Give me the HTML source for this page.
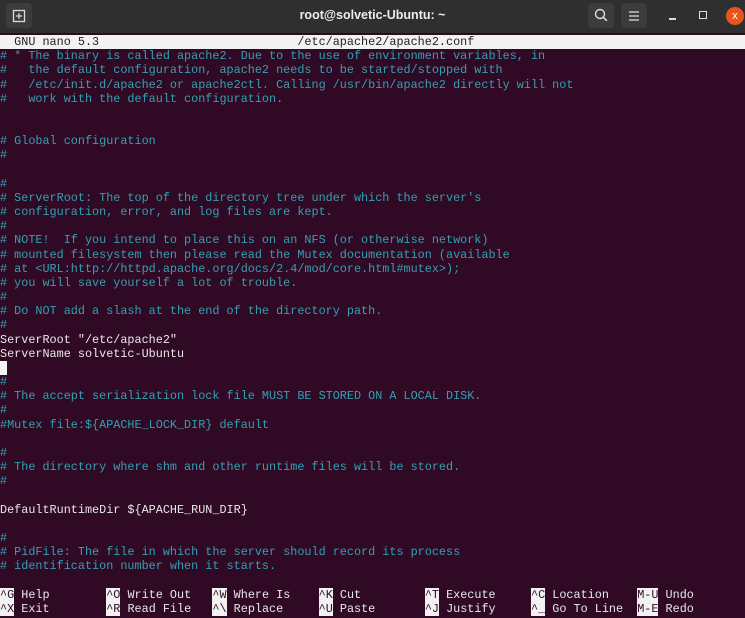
<!DOCTYPE html>
<html><head><meta charset="utf-8"><style>
html,body{margin:0;padding:0;width:745px;height:618px;overflow:hidden;background:#300a24;}
#tb{position:absolute;left:0;top:0;width:745px;height:33px;background:#2f2f2f;}
.btn{position:absolute;top:3px;height:25px;background:#3c3c3c;border-radius:4px;}
#title{position:absolute;left:0;width:745px;top:8px;text-align:center;color:#eee;font:bold 12.5px "Liberation Sans",sans-serif;}
pre{position:absolute;left:0;top:35px;margin:0;font:11.8px/14.17px "Liberation Mono",monospace;color:#e8e8e8;white-space:pre;}
.c{color:#33a0b2;}
.h{background:#f2f2f2;color:#222;display:inline-block;width:745px;margin-top:-1px;}
.k{background:#f2f2f2;color:#300a24;}
.cur{background:#f2f2f2;}
</style></head><body>
<div id="tb">
<div class="btn" style="left:6px;width:26px;"></div>
<svg style="position:absolute;left:12px;top:9px" width="14" height="14"><rect x="1.5" y="1.5" width="11" height="11" fill="none" stroke="#ddd" stroke-width="1.3"/><path d="M7 4v6M4 7h6" stroke="#ddd" stroke-width="1.2"/></svg>
<div id="title">root@solvetic-Ubuntu: ~</div>
<div class="btn" style="left:588px;width:26px;"></div>
<svg style="position:absolute;left:594px;top:8px" width="14" height="15"><circle cx="6" cy="6" r="4.5" fill="none" stroke="#ddd" stroke-width="1.4"/><path d="M9.3 9.3l3.5 3.5" stroke="#ddd" stroke-width="1.5"/></svg>
<div class="btn" style="left:621px;width:26px;"></div>
<svg style="position:absolute;left:628px;top:10px" width="12" height="12"><path d="M1 2h10M1 6h10M1 10h10" stroke="#ddd" stroke-width="1.3"/></svg>
<div style="position:absolute;left:669px;top:18px;width:7px;height:1.5px;background:#ddd"></div>
<div style="position:absolute;left:699px;top:11px;width:6px;height:6px;border:1.3px solid #ddd"></div>
<div style="position:absolute;left:726px;top:7px;width:18px;height:18px;border-radius:50%;background:#e9541e;color:#fff;font:11px 'Liberation Sans',sans-serif;text-align:center;line-height:18px">x</div>
</div>
<pre><span class="h">  GNU nano 5.3                            /etc/apache2/apache2.conf                          </span>
<span class="c"># * The binary is called apache2. Due to the use of environment variables, in
#   the default configuration, apache2 needs to be started/stopped with
#   /etc/init.d/apache2 or apache2ctl. Calling /usr/bin/apache2 directly will not
#   work with the default configuration.


# Global configuration
#

#
# ServerRoot: The top of the directory tree under which the server's
# configuration, error, and log files are kept.
#
# NOTE!  If you intend to place this on an NFS (or otherwise network)
# mounted filesystem then please read the Mutex documentation (available
# at &lt;URL:http://httpd.apache.org/docs/2.4/mod/core.html#mutex&gt;);
# you will save yourself a lot of trouble.
#
# Do NOT add a slash at the end of the directory path.
#</span>
ServerRoot "/etc/apache2"
ServerName solvetic-Ubuntu
<span class="cur"> </span>
<span class="c">#
# The accept serialization lock file MUST BE STORED ON A LOCAL DISK.
#
#Mutex file:${APACHE_LOCK_DIR} default

#
# The directory where shm and other runtime files will be stored.
#</span>

DefaultRuntimeDir ${APACHE_RUN_DIR}

<span class="c">#
# PidFile: The file in which the server should record its process
# identification number when it starts.</span>

<span class="k">^G</span> Help        <span class="k">^O</span> Write Out   <span class="k">^W</span> Where Is    <span class="k">^K</span> Cut         <span class="k">^T</span> Execute     <span class="k">^C</span> Location    <span class="k">M-U</span> Undo
<span class="k">^X</span> Exit        <span class="k">^R</span> Read File   <span class="k">^\</span> Replace     <span class="k">^U</span> Paste       <span class="k">^J</span> Justify     <span class="k">^_</span> Go To Line  <span class="k">M-E</span> Redo</pre>
</body></html>
